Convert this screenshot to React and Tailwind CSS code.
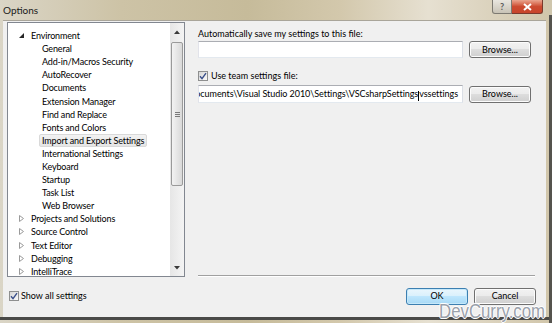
import React from 'react';

const children = [
  'General',
  'Add-in/Macros Security',
  'AutoRecover',
  'Documents',
  'Extension Manager',
  'Find and Replace',
  'Fonts and Colors',
  'Import and Export Settings',
  'International Settings',
  'Keyboard',
  'Startup',
  'Task List',
  'Web Browser',
];

const collapsed = ['Projects and Solutions', 'Source Control', 'Text Editor', 'Debugging', 'IntelliTrace'];

function CheckBox() {
  return (
    <span className="flex h-[10px] w-[10px] shrink-0 items-center justify-center border border-[#8e8f8f] bg-gradient-to-br from-[#d6d6d6] to-[#fafafa]">
      <svg width="8" height="8" viewBox="0 0 8 8">
        <path d="M1 4.3 L3 6.6 L7 1.2" fill="none" stroke="#3a4f8a" strokeWidth="1.4" />
      </svg>
    </span>
  );
}

function Button({ label, primary }) {
  return (
    <button
      className={
        primary
          ? 'flex h-[17px] w-[62px] items-center justify-center rounded-[3px] border border-[#3c7fb1] bg-[linear-gradient(#eaf6fd_0%,#d9f0fc_49%,#bee6fd_50%,#a7d9f5_100%)] shadow-[inset_0_0_0_1px_#c5e8fa] text-[9px] text-black'
          : 'flex h-[17px] w-[62px] items-center justify-center rounded-[3px] border border-[#707070] bg-[linear-gradient(#f2f2f2_0%,#ebebeb_49%,#dddddd_50%,#cfcfcf_100%)] shadow-[inset_0_0_0_1px_#fcfcfc] text-[9px] text-black'
      }
    >
      {label}
    </button>
  );
}

function TreeRow({ label, depth, state, selected }) {
  return (
    <div className="flex h-[13.1px] items-center tracking-[-0.15px]">
      {depth === 0 ? (
        <span className="flex w-[20px] shrink-0 items-center justify-end pr-[4px]">
          {state === 'open' ? (
            <svg width="5" height="5" viewBox="0 0 5 5">
              <path d="M5 0 L5 5 L0 5 Z" fill="#262626" />
            </svg>
          ) : (
            <svg width="5" height="7" viewBox="0 0 5 7">
              <path d="M0.5 0.5 L4.5 3.5 L0.5 6.5 Z" fill="none" stroke="#9a9a9a" strokeWidth="1" />
            </svg>
          )}
        </span>
      ) : (
        <span className="w-[31px] shrink-0" />
      )}
      <span
        className={
          selected
            ? 'whitespace-nowrap rounded-[2px] border border-[#d9d9d9] bg-gradient-to-b from-[#f2f2f2] to-[#e5e5e5] px-[2px] leading-[11px]'
            : 'whitespace-nowrap border border-transparent px-[2px] leading-[11px]'
        }
      >
        {label}
      </span>
    </div>
  );
}

function ScrollBar() {
  return (
    <div className="flex w-[14px] shrink-0 flex-col bg-gradient-to-r from-[#e6e6e6] to-[#f4f4f4]">
      <div className="flex h-[17px] items-center justify-center">
        <svg width="6" height="4" viewBox="0 0 6 4">
          <path d="M0 4 L3 0.5 L6 4 Z" fill="#3a3a3a" />
        </svg>
      </div>
      <div className="mx-[1px] mt-[2px] flex h-[144px] items-center justify-center rounded-[2px] border border-[#9a9a9a] bg-gradient-to-r from-[#f3f3f3] to-[#d9d9d9]">
        <div className="flex flex-col gap-[1px]">
          <span className="h-px w-[5px] bg-[#7a7a7a]" />
          <span className="h-px w-[5px] bg-[#7a7a7a]" />
          <span className="h-px w-[5px] bg-[#7a7a7a]" />
        </div>
      </div>
      <div className="flex-1" />
      <div className="flex h-[17px] items-center justify-center">
        <svg width="6" height="4" viewBox="0 0 6 4">
          <path d="M0 0 L3 3.5 L6 0 Z" fill="#3a3a3a" />
        </svg>
      </div>
    </div>
  );
}

export default function App() {
  return (
    <div className="relative h-[323px] w-[552px] overflow-hidden bg-[#cfc6ad] font-['Lato','Noto_Sans',sans-serif] text-[9px] text-black">
      <div className="flex h-[323px] w-[549px] flex-col bg-[linear-gradient(90deg,#dad5c6_0%,#cdc3a6_22%,#c6bb9a_45%,#d3c8ac_62%,#e6e0d1_78%,#d1c6ab_100%)]">
        {/* title bar */}
        <div className="flex h-[20px] shrink-0 items-start">
          <span className="pl-[3px] pt-[4px] text-[10px] leading-[12px] text-[#1a1a1a]">Options</span>
          <div className="flex-1" />
          <div className="flex h-[14px] w-[20px] items-center justify-center rounded-bl-[3px] border border-t-0 border-[#7d7a72] bg-gradient-to-b from-[#e9e6df] to-[#c8c3b6] text-[9px] font-bold text-[#5a5a5a]">
            ?
          </div>
          <div className="mr-[6px] flex h-[14px] w-[31px] items-center justify-center rounded-br-[3px] border border-l-0 border-t-0 border-[#7a3a2c] bg-gradient-to-b from-[#e9a58f] via-[#cc4b30] to-[#c8442a]">
            <svg width="9" height="8" viewBox="0 0 9 8">
              <path d="M1 1 L8 7 M8 1 L1 7" stroke="#ffffff" strokeWidth="2" />
            </svg>
          </div>
        </div>

        {/* body */}
        <div className="ml-[3px] mr-[3px] flex h-[297px] flex-col border-t border-[#a9a59a] bg-[#f0f0f0]">
          <div className="flex pl-[4px] pt-[1px]">
            <div className="flex h-[255px] w-[178px] overflow-hidden border border-[#828790] bg-white">
              <div className="flex-1 overflow-hidden pt-[6px]">
                <TreeRow label="Environment" depth={0} state="open" />
                {children.map((c) => (
                  <TreeRow key={c} label={c} depth={1} selected={c === 'Import and Export Settings'} />
                ))}
                {collapsed.map((c) => (
                  <TreeRow key={c} label={c} depth={0} state="closed" />
                ))}
              </div>
              <ScrollBar />
            </div>

            <div className="ml-[13px] flex h-[254px] w-[337px] flex-col">
              <div className="pt-[6px] leading-[11px]">Automatically save my settings to this file:</div>
              <div className="mt-[2px] flex items-center gap-[6px]">
                <div className="h-[17px] w-[265px] border border-[#abadb3] border-b-[#e3e9ef] border-l-[#e2e3ea] border-r-[#dbdfe6] bg-white" />
                <Button label="Browse..." />
              </div>
              <div className="mt-[12px] flex items-center gap-[3px] leading-[11px]">
                <CheckBox />
                <span>Use team settings file:</span>
              </div>
              <div className="mt-[4px] flex items-center gap-[6px]">
                <div className="flex h-[18px] w-[265px] items-center justify-end overflow-hidden border border-[#abadb3] border-b-[#e3e9ef] border-l-[#e2e3ea] border-r-[#dbdfe6] bg-white pr-[4px]">
                  <span className="whitespace-nowrap tracking-[-0.05px]">
                    Documents\Visual Studio 2010\Settings\VSCsharpSettings
                    <span className="inline-block h-[10px] w-px translate-y-[1px] bg-black align-middle" />
                    vssettings
                  </span>
                </div>
                <Button label="Browse..." />
              </div>
              <div className="flex-1" />
              <div className="h-px w-full bg-[#a0a0a0] shadow-[0_1px_0_#ffffff]" />
            </div>
          </div>

          <div className="flex flex-1 items-center pb-[2px] pl-[6px] pr-[10px]">
            <div className="flex items-center gap-[2px]">
              <CheckBox />
              <span>Show all settings</span>
            </div>
            <div className="flex-1" />
            <div className="flex gap-[6px]">
              <Button label="OK" primary />
              <Button label="Cancel" />
            </div>
          </div>
        </div>
        <div className="h-[3px] shrink-0 bg-[#4a4a48]" />
      </div>
      <div className="absolute right-0 top-[15px] h-[308px] w-[3px] bg-[#55534e]" />
      <div className="absolute left-[439px] top-[300px] origin-left scale-x-[0.8] whitespace-nowrap font-['Liberation_Sans',sans-serif] text-[21px] leading-[22px] text-[#9aa1ab] [text-shadow:0_0_1px_#fff,0_0_1px_#fff,1px_0_0_#fff,-1px_0_0_#fff,0_1px_0_#fff,0_-1px_0_#fff]">
        DevCurry.com
      </div>
    </div>
  );
}
